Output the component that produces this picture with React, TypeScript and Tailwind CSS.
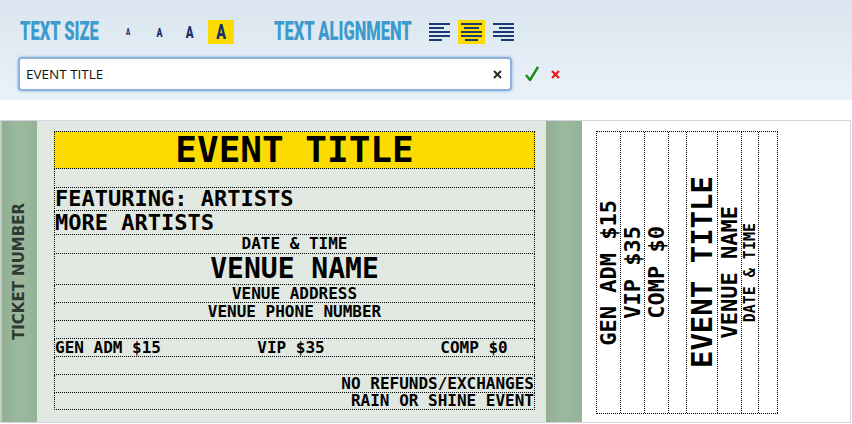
import type { ReactNode } from 'react'

const MONO = "font-['DejaVu_Sans_Mono',monospace] font-bold leading-none whitespace-pre text-black"

const ROWS: { box: string; txt?: string; text?: string }[] = [
  { box: 'h-[38px] border-t bg-[#fcdc00] justify-center', txt: 'text-[36px]', text: 'EVENT TITLE' },
  { box: 'h-[19px]' },
  { box: 'h-[23px] justify-start', txt: 'text-[22px]', text: 'FEATURING: ARTISTS' },
  { box: 'h-[24px] justify-start', txt: 'text-[22px]', text: 'MORE ARTISTS' },
  { box: 'h-[19px] justify-center', txt: 'text-[16px]', text: 'DATE & TIME' },
  { box: 'h-[31px] justify-center', txt: 'text-[28px]', text: 'VENUE NAME' },
  { box: 'h-[18px] justify-center', txt: 'text-[16px]', text: 'VENUE ADDRESS' },
  { box: 'h-[18px] justify-center', txt: 'text-[16px]', text: 'VENUE PHONE NUMBER' },
  { box: 'h-[18px]' },
  { box: 'h-[18px] justify-start', txt: 'text-[16px]', text: 'GEN ADM $15          VIP $35            COMP $0' },
  { box: 'h-[18px]' },
  { box: 'h-[18px] justify-end', txt: 'text-[16px]', text: 'NO REFUNDS/EXCHANGES' },
  { box: 'h-[17px] justify-end', txt: 'text-[16px]', text: 'RAIN OR SHINE EVENT' },
]

const STUB: { w: string; txt?: string; text?: string }[] = [
  { w: 'w-[24px]', txt: 'text-[22px]', text: 'GEN ADM $15' },
  { w: 'w-[24px]', txt: 'text-[22px]', text: 'VIP $35' },
  { w: 'w-[24px]', txt: 'text-[22px]', text: 'COMP $0' },
  { w: 'w-[18px]' },
  { w: 'w-[31px]', txt: 'text-[29px]', text: 'EVENT TITLE' },
  { w: 'w-[24px]', txt: 'text-[22px]', text: 'VENUE NAME' },
  { w: 'w-[17px]', txt: 'text-[15px]', text: 'DATE & TIME' },
  { w: 'w-[19px]' },
]

// line widths of the alignment icons, top to bottom
const LINES = [21, 15, 21, 21, 13]

function AlignIcon({ mode }: { mode: 'left' | 'center' | 'right' }) {
  return (
    <svg width="21" height="18" viewBox="0 0 21 18">
      {LINES.map((w, i) => {
        const x = mode === 'left' ? 0 : mode === 'right' ? 21 - w : (21 - w) / 2
        return <rect key={i} x={x} y={i * 4} width={w} height="2" fill="#1b3a70" />
      })}
    </svg>
  )
}

function Label({ children, w }: { children: ReactNode; w: string }) {
  return (
    <span className={`${w} inline-block whitespace-nowrap`}>
      <span className="inline-block origin-left scale-x-[0.66] font-['Roboto',sans-serif] text-[25px] font-black leading-none text-[#3c9bcd]">
        {children}
      </span>
    </span>
  )
}

function SizeBtn({ size, active }: { size: string; active?: boolean }) {
  return (
    <div className={`flex h-6 w-[26px] items-center justify-center ${active ? 'bg-[#fcdc00]' : ''}`}>
      <span className={`${size} inline-block scale-x-[0.68] font-['Roboto',sans-serif] font-black leading-none text-[#1b2f6b]`}>A</span>
    </div>
  )
}

function AlignBtn({ mode, active }: { mode: 'left' | 'center' | 'right'; active?: boolean }) {
  return (
    <div className={`flex h-6 w-[27px] items-center justify-center ${active ? 'bg-[#fcdc00]' : ''}`}>
      <AlignIcon mode={mode} />
    </div>
  )
}

function Toolbar() {
  return (
    <div className="h-[100px] bg-gradient-to-b from-[#dae5ef] to-[#eaf2f9] pt-5">
      <div className="flex h-6 items-center pl-5">
        <Label w="w-[79px]">TEXT SIZE</Label>
        <div className="ml-4 flex gap-[5px]">
          <SizeBtn size="text-[9px]" />
          <SizeBtn size="text-[13px]" />
          <SizeBtn size="text-[17px]" />
          <SizeBtn size="text-[21px]" active />
        </div>
        <div className="ml-10">
          <Label w="w-[136px]">TEXT ALIGNMENT</Label>
        </div>
        <div className="ml-4 flex gap-[5px]">
          <AlignBtn mode="left" />
          <AlignBtn mode="center" active />
          <AlignBtn mode="right" />
        </div>
      </div>
      <div className="mt-[13px] flex items-center pl-[18px]">
        <div className="flex h-[34px] w-[494px] items-center rounded-[4px] border-2 border-[#8db2dc] bg-white pl-[6px] pr-[8px] shadow-[0_0_3px_#7aa6d8]">
          <span className="flex-1 font-['Open_Sans',sans-serif] text-[13.5px] text-[#111]">EVENT TITLE</span>
          <svg width="9" height="9" viewBox="0 0 9 9">
            <path d="M1 1 L8 8 M8 1 L1 8" stroke="#2a2a2a" strokeWidth="2" />
          </svg>
        </div>
        <svg className="ml-[13px]" width="14" height="16" viewBox="0 0 14 16">
          <path d="M1 9 L5 14 L13 1" fill="none" stroke="#1c8a1c" strokeWidth="2.4" strokeLinejoin="round" />
        </svg>
        <svg className="ml-[12px]" width="9" height="9" viewBox="0 0 9 9">
          <path d="M1 1 L8 8 M8 1 L1 8" stroke="#e31b1b" strokeWidth="2.2" />
        </svg>
      </div>
    </div>
  )
}

function Ticket() {
  return (
    <div className="mt-5 flex h-[303px] w-[851px] border-y border-[#d3d4dc]">
      <div className="flex w-[37px] items-center justify-center border-l-2 border-[#c3cbc5] bg-gradient-to-r from-[#90af93] via-[#9cb99e] to-[#93b296]">
        <span className="rotate-180 whitespace-nowrap font-['DejaVu_Sans',sans-serif] text-[15px] font-bold leading-none text-[#2e3a31] [writing-mode:vertical-rl]">
          TICKET NUMBER
        </span>
      </div>
      <div className="w-[509px] bg-[#e1e8e1] pl-[17px] pt-[10px]">
        <div className="flex w-[481px] flex-col">
          {ROWS.map((r, i) => (
            <div key={i} className={`flex items-center border-x border-b border-dotted border-black ${r.box}`}>
              {r.text && <span className={`${MONO} ${r.txt}`}>{r.text}</span>}
            </div>
          ))}
        </div>
      </div>
      <div className="w-[36px] bg-gradient-to-r from-[#90af93] via-[#9cb99e] to-[#93b296]" />
      <div className="w-[269px] border-r border-[#d3d4dc] bg-white pl-[14px] pt-[10px]">
        <div className="flex h-[283px] w-[182px] border-y border-l border-dotted border-black">
          {STUB.map((c, i) => (
            <div key={i} className={`flex items-center justify-center border-r border-dotted border-black ${c.w}`}>
              {c.text && (
                <span className={`${MONO} ${c.txt} rotate-180 [writing-mode:vertical-rl]`}>{c.text}</span>
              )}
            </div>
          ))}
        </div>
      </div>
    </div>
  )
}

export default function App() {
  return (
    <div className="h-[424px] w-[852px] overflow-hidden bg-white">
      <Toolbar />
      <Ticket />
    </div>
  )
}
